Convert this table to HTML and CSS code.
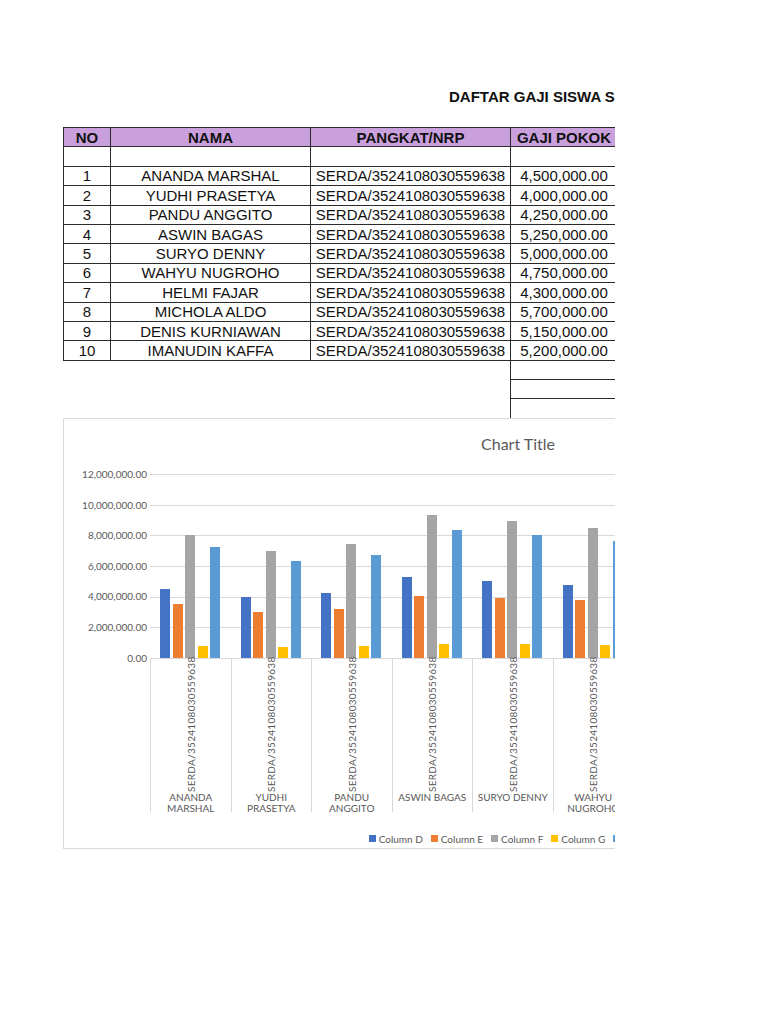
FILE: index.html
```html
<!DOCTYPE html>
<html lang="id">
<head>
<meta charset="utf-8">
<title>Daftar Gaji Siswa</title>
<link rel="stylesheet" href="styles.css">
</head>
<body>
<div class="sheet">
  <h1 class="title">DAFTAR GAJI SISWA SERDA</h1>
  <table class="grid">
    <colgroup>
      <col class="c-no"><col class="c-nama"><col class="c-nrp"><col class="c-gaji">
    </colgroup>
    <thead>
      <tr><th>NO</th><th>NAMA</th><th>PANGKAT/NRP</th><th>GAJI POKOK</th></tr>
    </thead>
    <tbody>
      <tr><td></td><td></td><td></td><td></td></tr>
      <tr><td>1</td><td>ANANDA MARSHAL</td><td>SERDA/3524108030559638</td><td>4,500,000.00</td></tr>
      <tr><td>2</td><td>YUDHI PRASETYA</td><td>SERDA/3524108030559638</td><td>4,000,000.00</td></tr>
      <tr><td>3</td><td>PANDU ANGGITO</td><td>SERDA/3524108030559638</td><td>4,250,000.00</td></tr>
      <tr><td>4</td><td>ASWIN BAGAS</td><td>SERDA/3524108030559638</td><td>5,250,000.00</td></tr>
      <tr><td>5</td><td>SURYO DENNY</td><td>SERDA/3524108030559638</td><td>5,000,000.00</td></tr>
      <tr><td>6</td><td>WAHYU NUGROHO</td><td>SERDA/3524108030559638</td><td>4,750,000.00</td></tr>
      <tr><td>7</td><td>HELMI FAJAR</td><td>SERDA/3524108030559638</td><td>4,300,000.00</td></tr>
      <tr><td>8</td><td>MICHOLA ALDO</td><td>SERDA/3524108030559638</td><td>5,700,000.00</td></tr>
      <tr><td>9</td><td>DENIS KURNIAWAN</td><td>SERDA/3524108030559638</td><td>5,150,000.00</td></tr>
      <tr><td>10</td><td>IMANUDIN KAFFA</td><td>SERDA/3524108030559638</td><td>5,200,000.00</td></tr>
      <tr class="extra"><td class="blank"></td><td class="blank"></td><td class="blank"></td><td class="sum"></td></tr>
      <tr class="extra"><td class="blank"></td><td class="blank"></td><td class="blank"></td><td class="sum"></td></tr>
      <tr class="extra"><td class="blank"></td><td class="blank"></td><td class="blank"></td><td class="sum last"></td></tr>
    </tbody>
  </table>

  <div class="chart">
    <div class="chart-title">Chart Title</div>
    <div class="plot-row">
      <div class="yaxis">
        <span>12,000,000.00</span>
        <span>10,000,000.00</span>
        <span>8,000,000.00</span>
        <span>6,000,000.00</span>
        <span>4,000,000.00</span>
        <span>2,000,000.00</span>
        <span>0.00</span>
      </div>
      <div class="main">
        <div class="plot">
          <div class="gridlines"><i></i><i></i><i></i><i></i><i></i><i></i></div>
          <div class="bars">
            <div class="cat"><b class="d" style="height:37.5%"></b><b class="e" style="height:29.17%"></b><b class="f" style="height:66.67%"></b><b class="g" style="height:6.67%"></b><b class="h" style="height:60%"></b></div>
            <div class="cat"><b class="d" style="height:33.33%"></b><b class="e" style="height:25%"></b><b class="f" style="height:58.33%"></b><b class="g" style="height:5.83%"></b><b class="h" style="height:52.5%"></b></div>
            <div class="cat"><b class="d" style="height:35.42%"></b><b class="e" style="height:26.67%"></b><b class="f" style="height:62.08%"></b><b class="g" style="height:6.25%"></b><b class="h" style="height:55.83%"></b></div>
            <div class="cat"><b class="d" style="height:43.75%"></b><b class="e" style="height:33.75%"></b><b class="f" style="height:77.5%"></b><b class="g" style="height:7.75%"></b><b class="h" style="height:69.75%"></b></div>
            <div class="cat"><b class="d" style="height:41.67%"></b><b class="e" style="height:32.5%"></b><b class="f" style="height:74.17%"></b><b class="g" style="height:7.42%"></b><b class="h" style="height:66.75%"></b></div>
            <div class="cat"><b class="d" style="height:39.58%"></b><b class="e" style="height:31.25%"></b><b class="f" style="height:70.83%"></b><b class="g" style="height:7.08%"></b><b class="h" style="height:63.75%"></b></div>
            <div class="cat"><b class="d" style="height:35.83%"></b><b class="e" style="height:27.5%"></b><b class="f" style="height:63.33%"></b><b class="g" style="height:6.33%"></b><b class="h" style="height:57%"></b></div>
            <div class="cat"><b class="d" style="height:47.5%"></b><b class="e" style="height:37.5%"></b><b class="f" style="height:85%"></b><b class="g" style="height:8.5%"></b><b class="h" style="height:76.5%"></b></div>
            <div class="cat"><b class="d" style="height:42.92%"></b><b class="e" style="height:33.33%"></b><b class="f" style="height:76.25%"></b><b class="g" style="height:7.67%"></b><b class="h" style="height:68.58%"></b></div>
            <div class="cat"><b class="d" style="height:43.33%"></b><b class="e" style="height:33.33%"></b><b class="f" style="height:76.67%"></b><b class="g" style="height:7.67%"></b><b class="h" style="height:69%"></b></div>
          </div>
        </div>
        <div class="xaxis">
          <div class="xcat"><span class="xcode">SERDA/3524108030559638</span><span class="xname">ANANDA MARSHAL</span></div>
          <div class="xcat"><span class="xcode">SERDA/3524108030559638</span><span class="xname">YUDHI PRASETYA</span></div>
          <div class="xcat"><span class="xcode">SERDA/3524108030559638</span><span class="xname">PANDU ANGGITO</span></div>
          <div class="xcat"><span class="xcode">SERDA/3524108030559638</span><span class="xname">ASWIN BAGAS</span></div>
          <div class="xcat"><span class="xcode">SERDA/3524108030559638</span><span class="xname">SURYO DENNY</span></div>
          <div class="xcat"><span class="xcode">SERDA/3524108030559638</span><span class="xname">WAHYU NUGROHO</span></div>
          <div class="xcat"><span class="xcode">SERDA/3524108030559638</span><span class="xname">HELMI FAJAR</span></div>
          <div class="xcat"><span class="xcode">SERDA/3524108030559638</span><span class="xname">MICHOLA ALDO</span></div>
          <div class="xcat"><span class="xcode">SERDA/3524108030559638</span><span class="xname">DENIS KURNIAWAN</span></div>
          <div class="xcat last"><span class="xcode">SERDA/3524108030559638</span><span class="xname">IMANUDIN KAFFA</span></div>
        </div>
      </div>
    </div>
    <div class="legend">
      <span class="li"><i class="d"></i>Column D</span>
      <span class="li"><i class="e"></i>Column E</span>
      <span class="li"><i class="f"></i>Column F</span>
      <span class="li"><i class="g"></i>Column G</span>
      <span class="li"><i class="h"></i>Column H</span>
    </div>
  </div>
</div>
</body>
</html>
```

FILE: styles.css
```css
html, body {
  margin: 0;
  padding: 0;
  background: #fff;
}

.sheet {
  width: 615px;
  overflow: hidden;
  padding: 88px 0 0 63px;
  box-sizing: border-box;
  font-family: "Liberation Sans", Arial, sans-serif;
  color: #111;
}

.title {
  margin: 0 0 21px 386px;
  font-size: 15px;
  line-height: 18px;
  font-weight: bold;
  white-space: nowrap;
  color: #111;
}

.grid {
  border-collapse: collapse;
  table-layout: fixed;
  width: 554px;
  font-size: 15px;
}

.c-no { width: 47px; }
.c-nama { width: 200px; }
.c-nrp { width: 200px; }
.c-gaji { width: 107px; }

.grid th,
.grid td {
  border: 1px solid #2b2b2b;
  padding: 0;
  height: 18.4px;
  line-height: 17px;
  text-align: center;
  white-space: nowrap;
  overflow: hidden;
}

.grid th {
  background: #c9a0dc;
  font-weight: bold;
}

.grid td.blank {
  border: none;
}

.grid td.sum {
  border-top: none;
  border-right: none;
  border-bottom: 1px solid #2b2b2b;
}

.grid td.sum.last {
  border-bottom: none;
}

/* chart */
.chart {
  width: 910px;
  box-sizing: border-box;
  border: 1px solid #d9d9d9;
  background: #fff;
  padding: 15px 0 3px 0;
  font-family: Lato, "Open Sans", sans-serif;
  color: #595959;
}

.chart-title {
  text-align: center;
  font-size: 16px;
  line-height: 20px;
}

.plot-row {
  display: flex;
  margin-top: 14px;
}

.yaxis {
  width: 86px;
  box-sizing: border-box;
  padding-right: 3px;
  height: 196px;
  display: flex;
  flex-direction: column;
  justify-content: space-between;
  align-items: flex-end;
  font-size: 10px;
  line-height: 12px;
}

.main {
  padding-top: 6px;
}

.plot {
  display: grid;
  width: 822px;
  height: 185px;
}

.gridlines,
.bars {
  grid-area: 1 / 1;
}

.gridlines {
  display: flex;
  flex-direction: column;
  border-bottom: 1px solid #d9d9d9;
}

.gridlines i {
  flex: 1;
  border-top: 1px solid #d9d9d9;
}

.bars {
  display: flex;
  height: 184px;
}

.cat {
  width: 80.5px;
  flex: none;
  display: flex;
  justify-content: center;
  align-items: flex-end;
  gap: 2.5px;
}

.cat b {
  width: 10px;
  display: block;
}

.d { background: #4472c4; }
.e { background: #ed7d31; }
.f { background: #a5a5a5; }
.g { background: #ffc000; }
.h { background: #5b9bd5; }

.xaxis {
  display: flex;
  height: 153px;
}

.xcat {
  width: 80.5px;
  flex: none;
  box-sizing: border-box;
  border-left: 1px solid #d9d9d9;
  display: flex;
  flex-direction: column;
  align-items: center;
}

.xcat.last {
  border-right: 1px solid #d9d9d9;
}

.xcode {
  writing-mode: vertical-rl;
  transform: rotate(180deg);
  height: 130px;
  margin-top: 3px;
  font-size: 10px;
  line-height: 12px;
  letter-spacing: 0.3px;
  white-space: nowrap;
}

.xname {
  font-size: 10px;
  line-height: 11px;
  text-align: center;
  padding: 0 2px;
}

.legend {
  margin-top: 21px;
  display: flex;
  justify-content: center;
  gap: 8px;
  font-size: 10px;
  line-height: 12px;
}

.li {
  display: flex;
  align-items: center;
  gap: 3px;
}

.li i {
  width: 7px;
  height: 7px;
  display: block;
}
```
